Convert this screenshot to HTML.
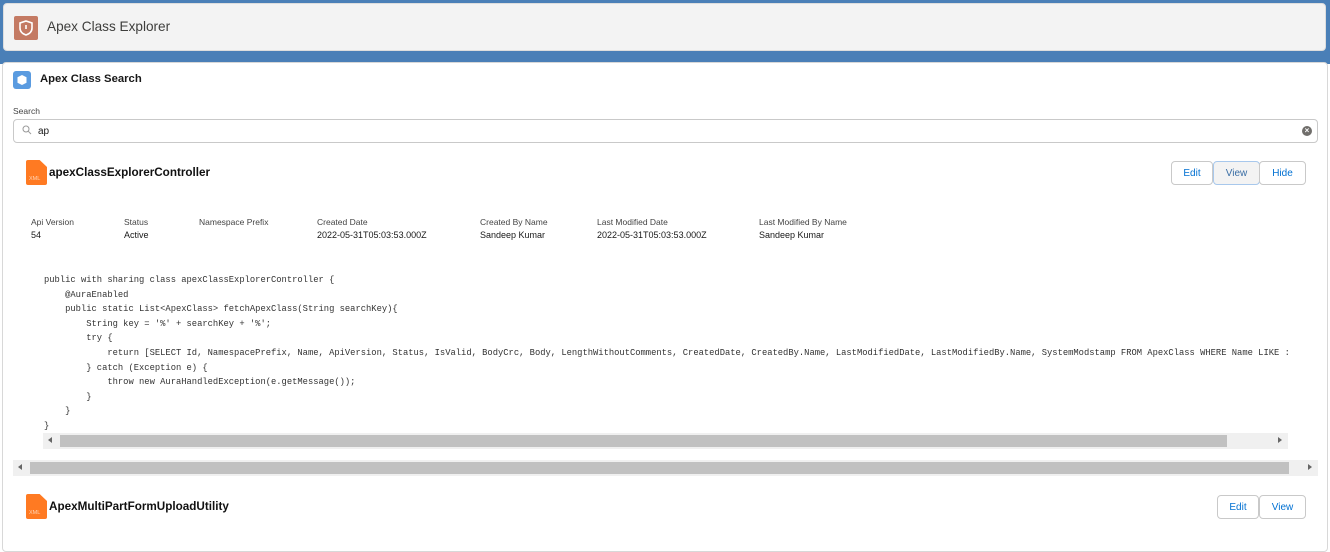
<!DOCTYPE html>
<html><head><meta charset="utf-8"><style>
*{box-sizing:border-box;margin:0;padding:0}
body{width:1330px;height:539px;overflow:hidden;background:#fff;font-family:"Liberation Sans",sans-serif;color:#181818;position:relative}
.bg{position:absolute;left:0;top:0;width:1330px;height:64px;background:#4a7fb7}
.hdr{position:absolute;left:3px;top:3px;width:1323px;height:48px;background:#f3f3f3;border-radius:4px;border:1px solid #ddd}
.hdr .ic{position:absolute;left:10px;top:12px;width:24px;height:24px;background:#c47a63;border-radius:2px}
.hdr .t{position:absolute;left:43px;top:15px;font-size:13.6px;color:#3e3e3c}
.card{position:absolute;left:2px;top:62px;width:1326px;height:490px;background:#fff;border:1px solid #d8d8d8;border-radius:4px}
.a{position:absolute}
.btn{position:absolute;height:24px;border:1px solid #c9c9c9;background:#fff;color:#0070d2;font-size:10px;text-align:center;line-height:24px;border-radius:4px}
.lab{font-size:8.5px;color:#444}
.val{font-size:9px;color:#181818}
pre{position:absolute;left:44px;top:273px;width:1244px;overflow:hidden;font-family:"Liberation Mono",monospace;font-size:8.8px;line-height:14.6px;color:#333}
.file{position:absolute;width:21px;height:25px;background:#ff7a22;border-radius:2px;clip-path:polygon(0 0,65% 0,100% 28%,100% 100%,0 100%)}
.file span{position:absolute;left:3px;bottom:3px;font-size:5.5px;color:#ffd4b5}
.sb{position:absolute;background:#f0f0f0}
.sb .th{position:absolute;top:2px;bottom:2px;background:#c1c1c1}
.arr{position:absolute;top:4px;width:0;height:0;border-top:3.5px solid transparent;border-bottom:3.5px solid transparent}
</style></head><body>
<div class="bg"></div>
<div class="hdr"><div class="ic"><svg width="24" height="24" viewBox="0 0 24 24"><path d="M12 5l6 2v5c0 4-3 6-6 7-3-1-6-3-6-7V7z" fill="none" stroke="#fff" stroke-width="1.6"/><path d="M11.2 9h1.6v4h-1.6z" fill="#fff"/></svg></div><div class="t">Apex Class Explorer</div></div>
<div class="card"></div>
<div class="a" style="left:13px;top:71px;width:18px;height:18px;background:#5a9be0;border-radius:3px"><svg width="18" height="18" viewBox="0 0 18 18"><path d="M9 4l4.5 2.3v5.4L9 14 4.5 11.7V6.3z" fill="#fff"/></svg></div>
<div class="a" style="left:40px;top:73px;font-size:11.3px;font-weight:bold">Apex Class Search</div>
<div class="a" style="left:13px;top:106px;font-size:8.5px;color:#444">Search</div>
<div class="a" style="left:13px;top:119px;width:1305px;height:24px;border:1px solid #c9c9c9;border-radius:4px"></div>
<svg class="a" style="left:22px;top:125px" width="10" height="10" viewBox="0 0 10 10"><circle cx="4" cy="4" r="3" fill="none" stroke="#999" stroke-width="1"/><path d="M6.2 6.2L9 9" stroke="#999"/></svg>
<div class="a" style="left:38px;top:126px;font-size:10px">ap</div>
<div class="a" style="left:1302px;top:126px;width:10px;height:10px;border-radius:50%;background:#706e6b;color:#fff;font-size:8px;line-height:10px;text-align:center;font-weight:bold">×</div>

<div class="file" style="left:26px;top:160px"><span>XML</span></div>
<div class="a" style="left:49px;top:166px;font-size:11.7px;font-weight:bold;color:#111">apexClassExplorerController</div>
<div class="btn" style="left:1171px;top:161px;width:42px">Edit</div>
<div class="btn" style="left:1213px;top:161px;width:47px;background:#f3f3f3;border-color:#a8c8ec;color:#3a6ea5">View</div>
<div class="btn" style="left:1259px;top:161px;width:47px">Hide</div>

<div class="a lab" style="left:31px;top:217px">Api Version</div><div class="a val" style="left:31px;top:230px">54</div>
<div class="a lab" style="left:124px;top:217px">Status</div><div class="a val" style="left:124px;top:230px">Active</div>
<div class="a lab" style="left:199px;top:217px">Namespace Prefix</div>
<div class="a lab" style="left:317px;top:217px">Created Date</div><div class="a val" style="left:317px;top:230px">2022-05-31T05:03:53.000Z</div>
<div class="a lab" style="left:480px;top:217px">Created By Name</div><div class="a val" style="left:480px;top:230px">Sandeep Kumar</div>
<div class="a lab" style="left:597px;top:217px">Last Modified Date</div><div class="a val" style="left:597px;top:230px">2022-05-31T05:03:53.000Z</div>
<div class="a lab" style="left:759px;top:217px">Last Modified By Name</div><div class="a val" style="left:759px;top:230px">Sandeep Kumar</div>

<pre>public with sharing class apexClassExplorerController {
    @AuraEnabled
    public static List&lt;ApexClass&gt; fetchApexClass(String searchKey){
        String key = '%' + searchKey + '%';
        try {
            return [SELECT Id, NamespacePrefix, Name, ApiVersion, Status, IsValid, BodyCrc, Body, LengthWithoutComments, CreatedDate, CreatedBy.Name, LastModifiedDate, LastModifiedBy.Name, SystemModstamp FROM ApexClass WHERE Name LIKE :key];
        } catch (Exception e) {
            throw new AuraHandledException(e.getMessage());
        }
    }
}</pre>
<div class="sb" style="left:43px;top:433px;width:1245px;height:16px"><div class="th" style="left:17px;width:1167px"></div><div class="arr" style="left:5px;border-right:4px solid #666"></div><div class="arr" style="right:6px;border-left:4px solid #666"></div></div>
<div class="sb" style="left:13px;top:460px;width:1305px;height:16px"><div class="th" style="left:17px;width:1259px"></div><div class="arr" style="left:5px;border-right:4px solid #666"></div><div class="arr" style="right:6px;border-left:4px solid #666"></div></div>

<div class="file" style="left:26px;top:494px"><span>XML</span></div>
<div class="a" style="left:49px;top:500px;font-size:11.7px;font-weight:bold;color:#111">ApexMultiPartFormUploadUtility</div>
<div class="btn" style="left:1217px;top:495px;width:42px">Edit</div>
<div class="btn" style="left:1259px;top:495px;width:47px">View</div>
</body></html>
